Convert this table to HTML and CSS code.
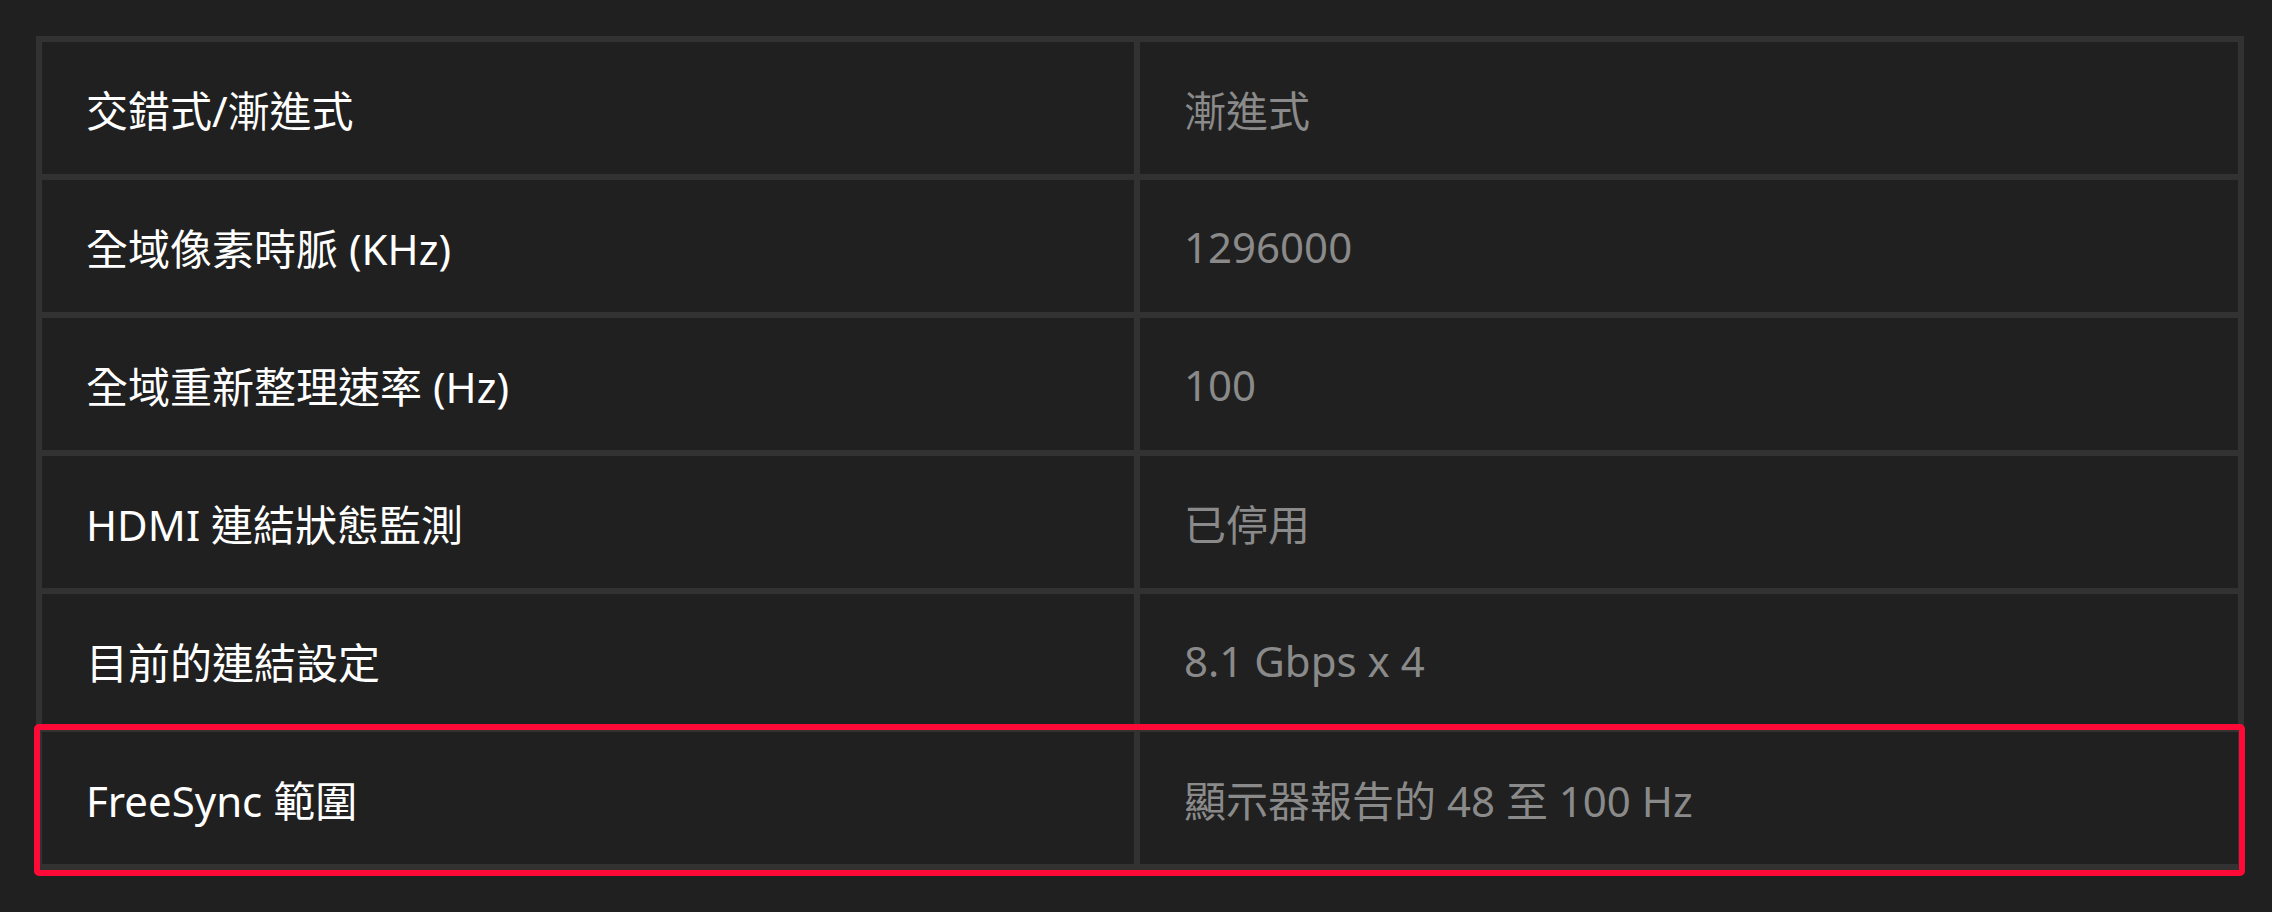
FILE: index.html
```html
<!DOCTYPE html>
<html lang="zh-Hant">
<head>
<meta charset="utf-8">
<link rel="stylesheet" href="styles.css">
</head>
<body>
<div class="page">
  <div class="table">
    <div class="row"><div class="cell label">交錯式/漸進式</div><div class="cell value">漸進式</div></div>
    <div class="row"><div class="cell label">全域像素時脈 (KHz)</div><div class="cell value">1296000</div></div>
    <div class="row"><div class="cell label">全域重新整理速率 (Hz)</div><div class="cell value">100</div></div>
    <div class="row"><div class="cell label">HDMI 連結狀態監測</div><div class="cell value">已停用</div></div>
    <div class="row"><div class="cell label">目前的連結設定</div><div class="cell value">8.1 Gbps x 4</div></div>
    <div class="row highlight"><div class="cell label">FreeSync 範圍</div><div class="cell value">顯示器報告的 48 至 100 Hz</div></div>
  </div>
</div>
</body>
</html>
```

FILE: styles.css
```css
html, body {
  margin: 0;
  padding: 0;
  background: #202020;
}
body {
  width: 2272px;
  height: 912px;
  overflow: hidden;
  font-family: "Noto Sans", "Noto Sans CJK TC", sans-serif;
}
.page {
  padding: 36px 28px 0 36px;
}
.table {
  width: 2208px;
  box-sizing: border-box;
  background: #323232;
  padding: 6px;
  display: flex;
  flex-direction: column;
  gap: 6px;
}
.row {
  display: grid;
  grid-template-columns: 1092px 1fr;
  gap: 6px;
  height: 132px;
}
.cell {
  background: #202020;
  display: flex;
  align-items: center;
  padding-left: 44px;
  font-size: 42px;
  white-space: nowrap;
}
.label {
  color: #ffffff;
}
.value {
  color: #8a8a8a;
}
.highlight {
  position: relative;
}
.highlight::after {
  content: "";
  position: absolute;
  top: -8px;
  left: -8px;
  right: -7px;
  bottom: -12px;
  border: 6px solid #ff0a36;
  border-radius: 5px;
  pointer-events: none;
}
```
